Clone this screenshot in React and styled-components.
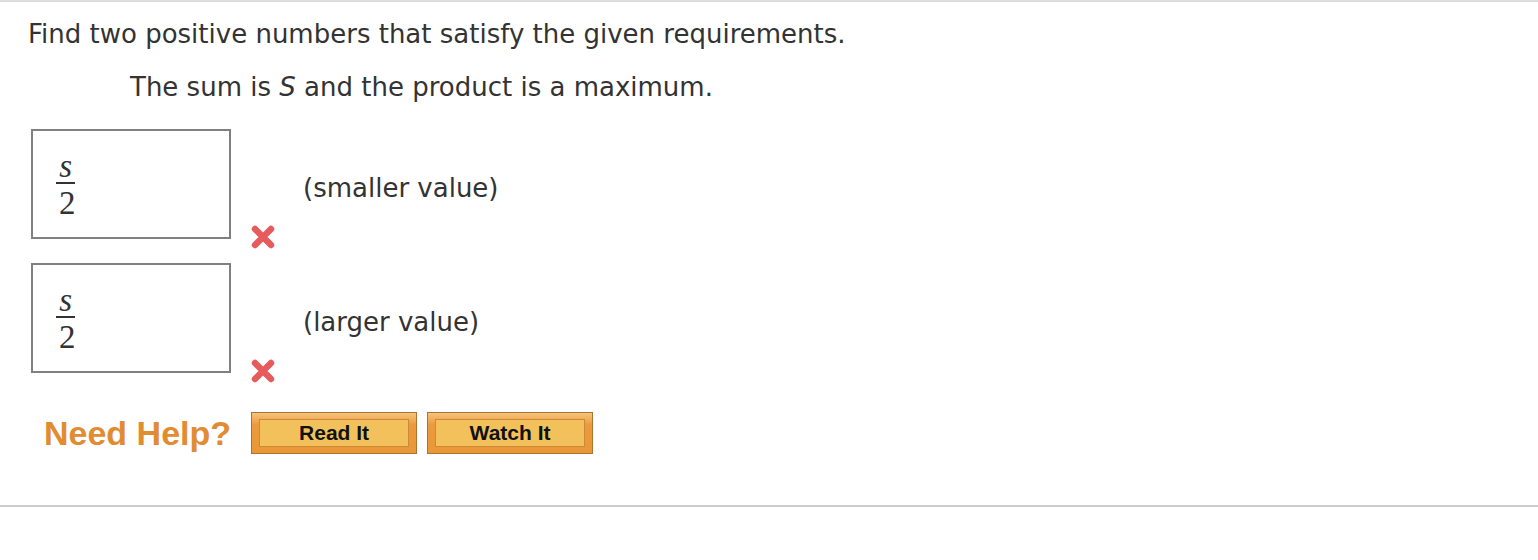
import React from "react";
import styled, { createGlobalStyle } from "styled-components";

const Global = createGlobalStyle`
  body {
    margin: 0;
    background: #fff;
    font-family: "DejaVu Sans", Verdana, sans-serif;
    color: #333;
  }
`;

const Page = styled.div`
  border-top: 2px solid #dddddd;
  border-bottom: 2px solid #cccccc;
  padding: 17px 0 51px 28px;
`;

const Prompt = styled.p`
  margin: 0;
  font-size: 26px;
  line-height: 30px;
`;

const Statement = styled.p`
  margin: 23px 0 0 102px;
  font-size: 26px;
  line-height: 30px;
`;

const Answers = styled.div`
  display: flex;
  flex-direction: column;
  gap: 24px;
  margin: 27px 0 0 3px;
`;

const AnswerRow = styled.div`
  display: flex;
  align-items: flex-start;
  height: 110px;
`;

const AnswerBox = styled.div`
  width: 200px;
  height: 110px;
  border: 2px solid #808080;
  display: flex;
  align-items: center;
  padding-left: 23px;
  box-sizing: border-box;
`;

const Frac = styled.span`
  display: inline-flex;
  flex-direction: column;
  align-items: center;
  font-family: "Liberation Serif", "Times New Roman", serif;
  font-size: 33px;
  line-height: 26px;
  color: #333;
`;

const Num = styled.span`
  font-style: italic;
  padding: 0 3px 3px;
  border-bottom: 2px solid #333;
`;

const Den = styled.span`
  padding: 6px 0 0 3px;
`;

const Mark = styled.svg`
  margin: 95px 0 0 19px;
  width: 26px;
  height: 26px;
  flex: none;
  filter: blur(0.4px);
`;

const Label = styled.span`
  margin: 44px 0 0 27px;
  font-size: 26px;
  line-height: 30px;
`;

const Help = styled.div`
  display: flex;
  align-items: center;
  gap: 10px;
  margin: 39px 0 0 16px;
`;

const HelpText = styled.span`
  font-family: "Liberation Sans", Arial, sans-serif;
  font-weight: bold;
  font-size: 34px;
  color: #e28c32;
  margin-right: 10px;
`;

const HelpButton = styled.button`
  width: 166px;
  height: 42px;
  padding: 6px 7px;
  border: 1px solid #a97432;
  background: linear-gradient(#f8c47c, #eb9a3c 30%, #ea9736);
  cursor: pointer;

  span {
    display: flex;
    align-items: center;
    justify-content: center;
    height: 100%;
    box-sizing: border-box;
    border: 1px solid #c98a3a;
    background: #f3c15b;
    font-family: "Liberation Sans", Arial, sans-serif;
    font-weight: bold;
    font-size: 21px;
    color: #111;
  }
`;

const WrongMark = () => (
  <Mark viewBox="0 0 26 26">
    <path
      d="M5 5 L21 21 M21 5 L5 21"
      stroke="#e65c5c"
      strokeWidth="6.5"
      strokeLinecap="round"
    />
  </Mark>
);

const answers = [
  { id: 1, label: "(smaller value)" },
  { id: 2, label: "(larger value)" },
];

const App = () => (
  <React.Fragment>
    <Global />
    <Page>
      <Prompt>Find two positive numbers that satisfy the given requirements.</Prompt>
      <Statement>
        The sum is <i>S</i> and the product is a maximum.
      </Statement>
      <Answers>
        {answers.map((a) => (
          <AnswerRow key={a.id}>
            <AnswerBox>
              <Frac>
                <Num>s</Num>
                <Den>2</Den>
              </Frac>
            </AnswerBox>
            <WrongMark />
            <Label>{a.label}</Label>
          </AnswerRow>
        ))}
      </Answers>
      <Help>
        <HelpText>Need Help?</HelpText>
        <HelpButton><span>Read It</span></HelpButton>
        <HelpButton><span>Watch It</span></HelpButton>
      </Help>
    </Page>
  </React.Fragment>
);

export default App;
